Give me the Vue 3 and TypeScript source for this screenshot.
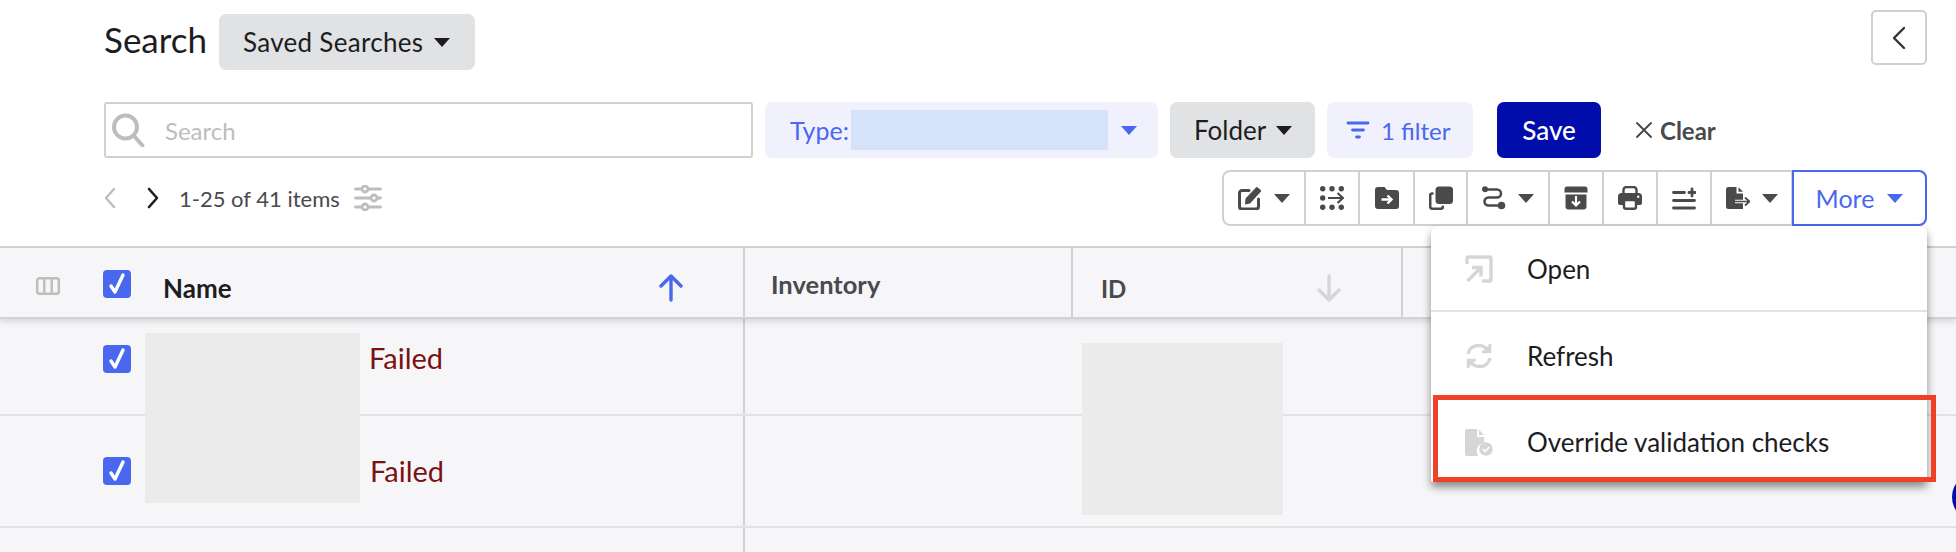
<script setup lang="ts">
const rows = [
  { id: 1, cls: 'row-a' },
  { id: 2, cls: 'row-b' },
]
</script>

<template>
  <div class="page">
    <header class="title-row">
      <h1 class="title">Search</h1>
      <button class="btn grey saved">Saved Searches <i class="caret"></i></button>
      <button class="back" aria-label="Collapse">
        <svg width="16" height="26" viewBox="0 0 16 26" fill="none" stroke="#333" stroke-width="2.4" stroke-linecap="round" stroke-linejoin="round"><path d="M13 3 3 13l10 10" /></svg>
      </button>
    </header>

    <div class="filter-row">
      <div class="search-box">
        <svg class="search-icon" width="34" height="34" viewBox="0 0 34 34" fill="none" stroke="#bdbdbd" stroke-width="4" stroke-linecap="round"><circle cx="14.500" cy="14" r="11.500" /><path d="M23 23l8.500 9.500" /></svg>
        <span class="placeholder">Search</span>
      </div>
      <div class="btn type">
        <span>Type:</span><span class="type-mask"></span><i class="caret blue"></i>
      </div>
      <button class="btn grey folder">Folder <i class="caret"></i></button>
      <button class="btn filter">
        <svg width="24" height="22" viewBox="0 0 24 22" fill="none" stroke="#4a68ef" stroke-width="2.800" stroke-linecap="round"><path d="M2 4h20M6.500 11h11M10.500 18h3" /></svg>
        1 filter
      </button>
      <button class="btn save">Save</button>
      <button class="clear">
        <svg width="20" height="20" viewBox="0 0 20 20" fill="none" stroke="#444" stroke-width="1.800" stroke-linecap="round"><path d="M3 3l14 14M17 3 3 17" /></svg>
        Clear
      </button>
    </div>

    <div class="tools-row">
      <div class="pager">
        <svg class="chev" width="14" height="22" viewBox="0 0 14 22" fill="none" stroke="#bdbdbd" stroke-width="2.400" stroke-linecap="round" stroke-linejoin="round"><path d="M11 2 3 11l8 9" /></svg>
        <svg class="chev next" width="14" height="22" viewBox="0 0 14 22" fill="none" stroke="#1d1d1f" stroke-width="2.600" stroke-linecap="round" stroke-linejoin="round"><path d="M3 2l8 9-8 9" /></svg>
        <span class="count">1-25 of 41 items</span>
        <svg class="sliders" width="28" height="26" viewBox="0 0 28 26" fill="none" stroke="#bdbdbd" stroke-width="2.800" stroke-linecap="round"><path d="M1.500 4h6M15 4h11.500M1.500 13h15M24 13h2.500M1.500 22h6M15 22h11.500" /><circle cx="11" cy="4" r="3" /><circle cx="20" cy="13" r="3" /><circle cx="11" cy="22" r="3" /></svg>
      </div>

      <div class="toolbar">
        <div class="tool w82">
          <svg class="ic" viewBox="0 0 24 24"><path d="M11 4.500H4a2.500 2.500 0 0 0-2.500 2.500v13.500A2.500 2.500 0 0 0 4 23h14a2.500 2.500 0 0 0 2.500-2.500V13" fill="none" stroke="#4a4a4c" stroke-width="3" stroke-linecap="round" /><path d="M7.500 12.500 18 1.500a1.300 1.300 0 0 1 1.800 0l3 2.500a1.300 1.300 0 0 1 0 1.800L12 17.400 7 18.500z" fill="#4a4a4c" /></svg>
          <i class="caret dark"></i>
        </div>
        <div class="tool w54">
          <svg class="ic" viewBox="0 0 24 24" fill="#4a4a4c"><circle cx="2.700" cy="2.700" r="2.700" /><circle cx="12" cy="2.700" r="2.700" /><circle cx="21.300" cy="2.700" r="2.700" /><circle cx="2.700" cy="12" r="2.700" /><circle cx="2.700" cy="21.300" r="2.700" /><circle cx="12" cy="21.300" r="2.700" /><circle cx="21.300" cy="21.300" r="2.700" /><path d="M8 12h15M17.500 7l5.500 5-5.500 5" fill="none" stroke="#4a4a4c" stroke-width="2.200" /></svg>
        </div>
        <div class="tool w55">
          <svg class="ic" viewBox="0 0 24 24"><path d="M3 1h6.500l2.500 3h9a3 3 0 0 1 3 3v13a3 3 0 0 1-3 3H3a3 3 0 0 1-3-3V4a3 3 0 0 1 3-3z" fill="#4a4a4c" /><path d="M6.500 13.500h9M12.500 9.500l4 4-4 4" fill="none" stroke="#fff" stroke-width="2.400" /></svg>
        </div>
        <div class="tool w53">
          <svg class="ic" viewBox="0 0 24 24"><rect x="6.500" y="0.500" width="17.500" height="17.500" rx="3.500" fill="#4a4a4c" /><path d="M3.500 7.500H2.800A1.800 1.800 0 0 0 1.200 9.300v11.400a2 2 0 0 0 2 2h8.600a2 2 0 0 0 2-2" fill="none" stroke="#4a4a4c" stroke-width="2.600" stroke-linecap="round" /></svg>
        </div>
        <div class="tool w82">
          <svg class="ic" viewBox="0 0 24 24" fill="none" stroke="#4a4a4c" stroke-width="2.500"><path d="M3 3.500h12a4 4 0 0 1 4 4v0a4 4 0 0 1-4 4H6.500a4 4 0 0 0-4 4v0a4 4 0 0 0 4 4H17" /><circle cx="3" cy="3.200" r="1.800" fill="#4a4a4c" /><circle cx="19.500" cy="19.500" r="3.800" fill="#4a4a4c" stroke="none" /></svg>
          <i class="caret dark"></i>
        </div>
        <div class="tool w54">
          <svg class="ic" viewBox="0 0 24 24"><path d="M3 .5h18a2.500 2.500 0 0 1 2.500 2.500v3.500H.5V3A2.500 2.500 0 0 1 3 .5z" fill="#4a4a4c" /><path d="M1.500 8.500h21V20.500a3 3 0 0 1-3 3H4.500a3 3 0 0 1-3-3z" fill="#4a4a4c" /><path d="M12 10v9M8 15.500l4 4 4-4" fill="none" stroke="#fff" stroke-width="2.200" /></svg>
        </div>
        <div class="tool w54">
          <svg class="ic" viewBox="0 0 24 24"><path d="M5.500 8V4a3 3 0 0 1 3-3h7a3 3 0 0 1 3 3v4" fill="none" stroke="#4a4a4c" stroke-width="2.400" /><path d="M3.500 7h17a3.500 3.500 0 0 1 3.500 3.500V17a2 2 0 0 1-2 2H2a2 2 0 0 1-2-2v-6.500A3.500 3.500 0 0 1 3.500 7z" fill="#4a4a4c" /><rect x="6" y="14" width="12" height="8.800" rx="2" fill="#fff" stroke="#4a4a4c" stroke-width="2.400" /><circle cx="20.200" cy="10.800" r="1.200" fill="#fff" /></svg>
        </div>
        <div class="tool w54">
          <svg class="ic" viewBox="0 0 24 24" fill="none" stroke="#4a4a4c" stroke-width="2.800" stroke-linecap="round"><path d="M1.500 6.500h11M17 6.500h6.500M20 3v7M1.500 14.500h21M1.500 22h21" /></svg>
        </div>
        <div class="tool w81">
          <svg class="ic" viewBox="0 0 24 24"><path d="M2.500 1H10.500V7.500H17V23H2.500A2.500 2.500 0 0 1 0 20.500V3.500A2.500 2.500 0 0 1 2.500 1z" fill="#4a4a4c" /><path d="M12.500 1.200 17 5.800h-4.500z" fill="#4a4a4c" /><path d="M9 15.500h14M19 11.500l4.500 4-4.500 4" fill="none" stroke="#fff" stroke-width="3.600" /><path d="M9 15.500h14M19 11.500l4.500 4-4.500 4" fill="none" stroke="#4a4a4c" stroke-width="1.700" /></svg>
          <i class="caret dark"></i>
        </div>
        <div class="tool more">More <i class="caret blue"></i></div>
      </div>
    </div>

    <section class="table">
      <div class="thead">
        <div class="th first">
          <svg class="cols" width="24" height="18" viewBox="0 0 24 18" fill="none" stroke="#bdbdbd" stroke-width="2.400"><rect x="1.200" y="1.200" width="21.600" height="15.600" rx="2" /><path d="M8.300 1v16M15.700 1v16" /></svg>
          <span class="check">
            <svg width="18" height="24" viewBox="0 0 18 24" fill="none" stroke="#fff" stroke-width="3.400" stroke-linecap="round" stroke-linejoin="round"><path d="M3 14l4 6L15 3" /></svg>
          </span>
          <span class="name">Name</span>
          <svg class="sort" width="24" height="28" viewBox="0 0 24 28" fill="none" stroke="#4a68ef" stroke-width="3.400" stroke-linecap="round" stroke-linejoin="round"><path d="M12 26V2M2 12 12 2l10 10" /></svg>
        </div>
        <div class="th inv">Inventory</div>
        <div class="th idcol">
          <span>ID</span>
          <svg width="24" height="28" viewBox="0 0 24 28" fill="none" stroke="#d6d6d8" stroke-width="3.400" stroke-linecap="round" stroke-linejoin="round"><path d="M12 2v24M2 16l10 10 10-10" /></svg>
        </div>
        <div class="th last"></div>
      </div>

      <div v-for="r in rows" :key="r.id" class="row" :class="r.cls">
        <div class="cell">
          <span class="check">
            <svg width="18" height="24" viewBox="0 0 18 24" fill="none" stroke="#fff" stroke-width="3.400" stroke-linecap="round" stroke-linejoin="round"><path d="M3 14l4 6L15 3" /></svg>
          </span>
          <span class="failed">Failed</span>
        </div>
      </div>
      <div class="row-rest"><div class="cell"></div></div>

      <div class="mask mask-name"></div>
      <div class="mask mask-id"></div>
    </section>

    <div class="menu">
      <div class="item with-line">
        <svg class="mi" viewBox="0 0 28 28" fill="none" stroke="#d6d6d8" stroke-width="3.400"><path d="M2 9V3.500A1.500 1.500 0 0 1 3.500 2h21A1.500 1.500 0 0 1 26 3.500v21a1.500 1.500 0 0 1-1.500 1.500H17" /><path d="M2.500 26 15 13.500M7 12.500h9v9" /></svg>
        <span>Open</span>
      </div>
      <div class="item">
        <svg class="mi" viewBox="0 0 28 28" fill="none" stroke="#d6d6d8" stroke-width="3.400"><path d="M3 12C4 6.500 8.500 3.500 13.500 3.500c4 0 7 1.500 10 5" /><path d="M25 2v8h-8" stroke-width="2.600" fill="#d6d6d8" /><path d="M25 16c-1 5.500-5.500 8.500-10.500 8.500-4 0-7-1.500-10-5" /><path d="M3 26v-8h8" stroke-width="2.600" fill="#d6d6d8" /></svg>
        <span>Refresh</span>
      </div>
      <div class="item">
        <svg class="mi" viewBox="0 0 28 28"><path d="M2 1h10v8h7v6a8 8 0 0 0-5.500 13H2a2 2 0 0 1-2-2V3a2 2 0 0 1 2-2z" fill="#d6d6d8" /><path d="M14 1.500l5 5.500h-5z" fill="#d6d6d8" /><circle cx="21" cy="21" r="6.800" fill="#d6d6d8" /><path d="M17.800 21l2.400 2.600 4-4.600" fill="none" stroke="#fff" stroke-width="1.500" /></svg>
        <span>Override validation checks</span>
      </div>
    </div>
    <div class="highlight"></div>
    <div class="chat"></div>
  </div>
</template>

<style>
html, body { margin: 0; background: #fff; }
</style>

<style scoped>
.page {
  position: relative;
  width: 1956px;
  height: 552px;
  overflow: hidden;
  background: #fff;
  font-family: Lato, "Liberation Sans", sans-serif;
  color: #1d1d1f;
}
button { font: inherit; border: 0; padding: 0; background: none; color: inherit; }
.title-row {
  display: flex;
  align-items: flex-start;
  height: 102px;
  padding-left: 104px;
  padding-right: 29px;
  box-sizing: border-box;
}
.title {
  margin: 18px 0 0 0;
  width: 115px;
  font-size: 35px;
  line-height: 42px;
  font-weight: 400;
}
.btn {
  display: flex;
  align-items: center;
  box-sizing: border-box;
  height: 56px;
  border-radius: 7px;
  font-size: 26px;
}
.grey { background: #e1e2e4; }
.saved { margin-top: 14px; width: 256px; padding-left: 24px; gap: 11px; letter-spacing: 0.3px; }
.back {
  margin: 10px 0 0 auto;
  width: 56px;
  height: 55px;
  border: 2px solid #d0d0d0;
  border-radius: 5px;
  box-sizing: border-box;
  display: flex;
  align-items: center;
  justify-content: center;
}
.caret {
  display: inline-block;
  width: 0;
  height: 0;
  border-left: 8px solid transparent;
  border-right: 8px solid transparent;
  border-top: 9px solid #1d1d1f;
  flex: none;
}
.caret.blue { border-top-color: #4a68ef; }
.caret.dark { border-top-color: #4a4a4c; }
.filter-row { display: flex; gap: 12px; height: 56px; }
.search-box {
  margin-left: 104px;
  width: 649px;
  height: 56px;
  box-sizing: border-box;
  border: 2px solid #d0d0d0;
  border-radius: 3px;
  display: flex;
  align-items: center;
  padding-left: 5px;
}
.placeholder { margin-left: 20px; font-size: 24px; color: #bdbdbd; }
.type {
  width: 393px;
  padding-left: 25px;
  background: #f0f1fc;
  color: #4a68ef;
  font-size: 25px;
}
.type-mask { width: 257px; height: 40px; background: #d6e1fa; margin-left: 2px; margin-right: 13px; }
.folder { width: 145px; padding-left: 24px; gap: 10px; }
.filter { width: 146px; padding-left: 19px; gap: 11px; background: #f0f1fc; color: #4a68ef; font-size: 24px; }
.save {
  width: 104px;
  margin-left: 12px;
  justify-content: center;
  background: #000dab;
  color: #fff;
  font-weight: 500;
}
.clear {
  display: flex;
  align-items: center;
  gap: 6px;
  margin-left: 21px;
  font-size: 24px;
  font-weight: 700;
  color: #4a4a4c;
}
.tools-row {
  display: flex;
  justify-content: space-between;
  align-items: center;
  height: 56px;
  margin-top: 12px;
  padding-left: 103px;
  padding-right: 29px;
}
.pager { display: flex; align-items: center; font-size: 22px; color: #4a4a4c; }
.chev { flex: none; }
.next { margin-left: 29px; }
.count { margin-left: 19px; }
.sliders { margin-left: 14px; }
.toolbar {
  display: flex;
  height: 56px;
  box-sizing: border-box;
  border: 2px solid #d0d0d0;
  border-radius: 8px;
  background: #fff;
  width: 705px;
}
.tool {
  display: flex;
  align-items: center;
  justify-content: center;
  gap: 12px;
  box-sizing: border-box;
  height: 52px;
  border-right: 2px solid #d0d0d0;
}
.w82 { width: 82px; }
.w81 { width: 81px; }
.w54 { width: 54px; }
.w55 { width: 55px; }
.w53 { width: 53px; }
.ic { width: 24px; height: 24px; flex: none; }
.more {
  flex: 1;
  margin: -2px -2px -2px -1px;
  height: 56px;
  border: 2px solid #4a68ef;
  border-radius: 0 8px 8px 0;
  font-size: 25px;
  color: #4a68ef;
  gap: 13px;
}
.table {
  position: relative;
  margin-top: 20px;
  height: 306px;
  background: #f6f6f9;
  border-top: 2px solid #d2d2d4;
  box-sizing: border-box;
}
.thead {
  position: relative;
  display: grid;
  grid-template-columns: 745px 328px 330px 1fr;
  height: 71px;
  box-sizing: border-box;
  border-bottom: 2px solid #d2d2d4;
  box-shadow: 0 3px 6px rgba(0, 0, 0, 0.12);
}
.th {
  display: flex;
  box-sizing: border-box;
  border-right: 2px solid #d2d2d4;
  font-size: 24px;
}
.first { align-items: flex-start; padding-left: 36px; }
.cols { margin-top: 29px; flex: none; }
.th .check { margin: 22px 0 0 43px; }
.name { margin: 25px 0 0 32px; font-size: 26px; font-weight: 700; line-height: 30px; }
.sort { margin: 26px 60px 0 auto; }
.inv { padding: 20px 0 0 26px; font-size: 25.500px; font-weight: 700; color: #4a4a4c; line-height: 32px; }
.idcol { padding: 26px 60px 0 28px; font-weight: 700; line-height: 30px; color: #4a4a4c; justify-content: space-between; }
.idcol svg { margin-top: 0; }
.last { border-right: 0; }
.check {
  display: flex;
  align-items: center;
  justify-content: center;
  width: 28px;
  height: 28px;
  flex: none;
  border-radius: 4px;
  background: #4a68ef;
}
.row, .row-rest { box-sizing: border-box; }
.row { border-bottom: 2px solid #e2e2e4; }
.cell {
  box-sizing: border-box;
  width: 745px;
  height: 100%;
  border-right: 2px solid #d2d2d4;
  padding-left: 103px;
  display: flex;
  align-items: flex-start;
}
.row-a { height: 97px; }
.row-b { height: 112px; }
.row-rest { height: 25px; }
.row-a .check { margin-top: 26px; }
.row-b .check { margin-top: 41px; }
.failed { color: #7a1212; font-size: 29px; line-height: 34px; }
.row-a .failed { margin: 22px 0 0 238px; }
.row-b .failed { margin: 38px 0 0 239px; }
.mask { position: absolute; background: #ebebeb; }
.mask-name { left: 145px; top: 85px; width: 215px; height: 170px; }
.mask-id { left: 1082px; top: 95px; width: 201px; height: 172px; }
.menu {
  position: absolute;
  left: 1431px;
  top: 226px;
  width: 496px;
  height: 256px;
  background: #fff;
  border-radius: 8px 8px 2px 2px;
  box-shadow: 0 5px 9px rgba(0, 0, 0, 0.45);
}
.item {
  display: flex;
  align-items: center;
  height: 86px;
  padding-left: 34px;
  padding-top: 2px;
  font-size: 26px;
  box-sizing: border-box;
}
.with-line { border-bottom: 2px solid #e2e2e4; }
.mi { width: 28px; height: 28px; flex: none; margin-right: 34px; }
.highlight {
  position: absolute;
  left: 1433px;
  top: 395px;
  width: 503px;
  height: 87px;
  box-sizing: border-box;
  border: 5px solid #ee4125;
}
.chat {
  position: absolute;
  left: 1952px;
  top: 473px;
  width: 48px;
  height: 48px;
  border-radius: 50%;
  background: #000dab;
}
</style>
